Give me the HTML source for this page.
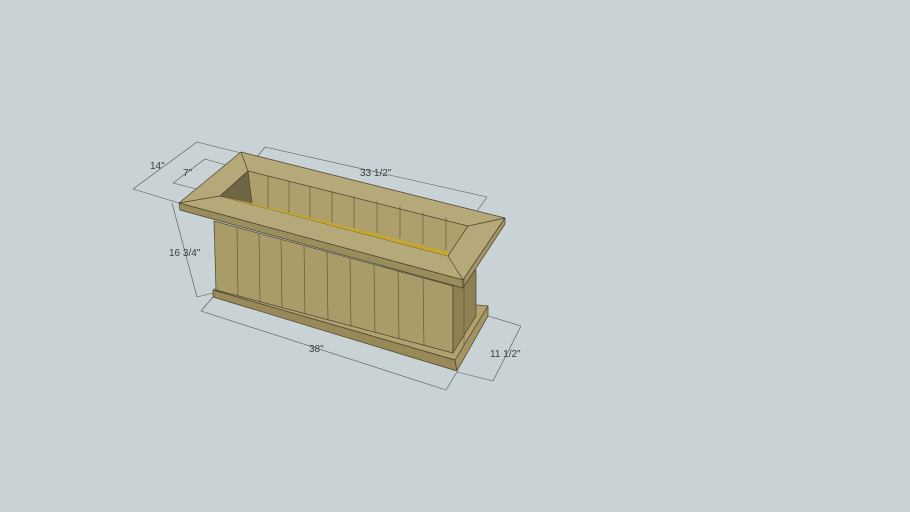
<!DOCTYPE html>
<html><head><meta charset="utf-8"><style>
html,body{margin:0;padding:0;background:#c9d2d4;}
svg{display:block}
text{font-family:"Liberation Sans",sans-serif;font-size:10px;fill:#3c3c3c}
</style></head><body>
<svg width="910" height="512" viewBox="0 0 910 512">
<rect width="910" height="512" fill="#c9d2d4"/>
<g stroke="#555" stroke-width="0.6" fill="none">
<!-- 14 -->
<line x1="133" y1="189" x2="197" y2="142"/><line x1="197" y1="142" x2="241" y2="153"/><line x1="133" y1="189" x2="179" y2="203"/>
<!-- 7 -->
<line x1="173" y1="183" x2="205" y2="159"/><line x1="205" y1="159" x2="240" y2="169"/><line x1="173" y1="183" x2="212" y2="193"/>
<!-- 33 1/2 -->
<line x1="265" y1="147" x2="487" y2="197"/><line x1="265" y1="147" x2="248" y2="168"/><line x1="487" y1="197" x2="468" y2="224"/>
<!-- 16 3/4 -->
<line x1="172" y1="203" x2="197" y2="297"/><line x1="197" y1="297" x2="213" y2="293"/>
<!-- 38 -->
<line x1="201" y1="311" x2="446" y2="390"/><line x1="201" y1="311" x2="213" y2="297"/><line x1="446" y1="390" x2="457" y2="372"/>
<!-- 11 1/2 -->
<line x1="521" y1="326" x2="493" y2="381"/><line x1="521" y1="326" x2="488" y2="316"/><line x1="493" y1="381" x2="457" y2="372"/>
</g>
<text x="150" y="169">14"</text>
<text x="183" y="176">7"</text>
<text x="360" y="176">33 1/2"</text>
<text x="169" y="256">16 3/4"</text>
<text x="309" y="352">38"</text>
<text x="490" y="357">11 1/2"</text>

<g stroke="#4a4230" stroke-width="0.7" stroke-linejoin="round">
<!-- base -->
<polygon points="213,290 228,282 488,306 455,360" fill="#b0a370"/>
<polygon points="213,290 455,360 457,371 213,297" fill="#978a58"/>
<polygon points="455,360 488,306 488,316 457,371" fill="#a29463"/>
<!-- body -->
<polygon points="214,221 453,286 453,353 216,290" fill="#a99c69"/>
<polygon points="453,286 476,270 476,316 453,353" fill="#8d8053"/>
<!-- rim -->
<polygon points="241,152 179,203 463,280 505,218" fill="#b6a979"/>
<polygon points="179,203 463,280 463,288 180,210" fill="#9a8d5c"/>
<polygon points="463,280 505,218 505,224 463,288" fill="#a39665"/>
<!-- opening -->
<polygon points="248,171 220,196 448,256 468,226" fill="#ada06c"/>
<polygon points="248,171 220,196 252,203" fill="#6f6644"/>
<polygon points="252,203 448,252 448,256 220,196" fill="#c7a72c" stroke="none"/>
<line x1="241" y1="152" x2="248" y2="171"/><line x1="179" y1="203" x2="220" y2="196"/>
<line x1="463" y1="280" x2="448" y2="256"/><line x1="505" y1="218" x2="468" y2="226"/>
</g>
<g stroke="#5a5035" stroke-width="0.6">
<!-- back wall planks -->
<line x1="268" y1="176" x2="268" y2="208"/><line x1="289" y1="181" x2="289" y2="213"/>
<line x1="310" y1="186" x2="310" y2="218"/><line x1="332" y1="191" x2="332" y2="223"/>
<line x1="354" y1="196" x2="354" y2="228"/><line x1="377" y1="201" x2="377" y2="233"/>
<line x1="400" y1="206" x2="400" y2="238"/><line x1="423" y1="212" x2="423" y2="244"/>
<line x1="446" y1="217" x2="446" y2="250"/>
<!-- front planks -->
<line x1="237" y1="228" x2="238" y2="296"/><line x1="259" y1="234" x2="260" y2="302"/>
<line x1="281" y1="240" x2="282" y2="308"/><line x1="304" y1="246" x2="305" y2="314"/>
<line x1="327" y1="252" x2="328" y2="320"/><line x1="350" y1="258" x2="351" y2="326"/>
<line x1="374" y1="265" x2="375" y2="333"/><line x1="398" y1="271" x2="399" y2="339"/>
<line x1="423" y1="278" x2="424" y2="346"/>
<line x1="464" y1="279" x2="464" y2="345"/>
</g>
</svg>
</body></html>
